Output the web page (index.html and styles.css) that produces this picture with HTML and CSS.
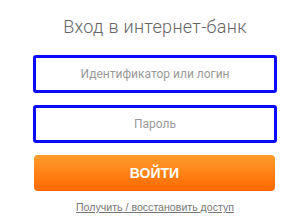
FILE: index.html
```html
<!DOCTYPE html>
<html>
  <head>
    <meta charset="utf-8">
    <title>Вход в интернет-банк</title>
    <link rel="stylesheet" href="styles.css">
  </head>
  <body>
    <div class="page">
      <form class="login">
        <h1 class="login-title">Вход в интернет-банк</h1>
        <input class="login-field" type="text" placeholder="Идентификатор или логин">
        <input class="login-field" type="password" placeholder="Пароль">
        <button class="login-submit" type="button">ВОЙТИ</button>
        <a class="login-restore" href="#">Получить / восстановить доступ</a>
      </form>
    </div>
  </body>
</html>
```

FILE: styles.css
```css
:root {
  --field-border: #0a0aff;
  --placeholder: #9a9a9a;
  --title: #666666;
  --link: #777777;
  --orange-top: #ff9c2c;
  --orange-bottom: #ff6800;
}

body {
  margin: 0;
  background: #ffffff;
  font-family: Roboto, "Liberation Sans", sans-serif;
}

.page {
  width: 300px;
  padding-left: 10px;
  box-sizing: border-box;
}

.login {
  width: 244px;
  margin: 0 auto;
  display: flex;
  flex-direction: column;
  align-items: stretch;
}

.login-title {
  margin: 16px 0 17px;
  font-size: 18px;
  font-weight: 300;
  line-height: 22px;
  color: var(--title);
  text-align: center;
  letter-spacing: 0.3px;
}

.login-field {
  height: 38px;
  margin: 0 0 12px;
  padding: 0 10px;
  box-sizing: border-box;
  border: 3px solid var(--field-border);
  border-radius: 3px;
  font-family: Roboto, "Liberation Sans", sans-serif;
  font-size: 12px;
  text-align: center;
  outline: none;
}

.login-field::placeholder {
  color: var(--placeholder);
}

.login-submit {
  height: 36px;
  margin: 0 2px 9px 1px;
  border: none;
  border-radius: 4px;
  background: linear-gradient(to bottom, var(--orange-top), var(--orange-bottom));
  color: #ffffff;
  font-family: "Liberation Sans", Arial, sans-serif;
  font-size: 14px;
  font-weight: bold;
  cursor: pointer;
}

.login-restore {
  align-self: center;
  font-family: "Liberation Sans", Arial, sans-serif;
  font-size: 10.6px;
  line-height: 14px;
  color: var(--link);
  text-decoration: underline;
}
```
